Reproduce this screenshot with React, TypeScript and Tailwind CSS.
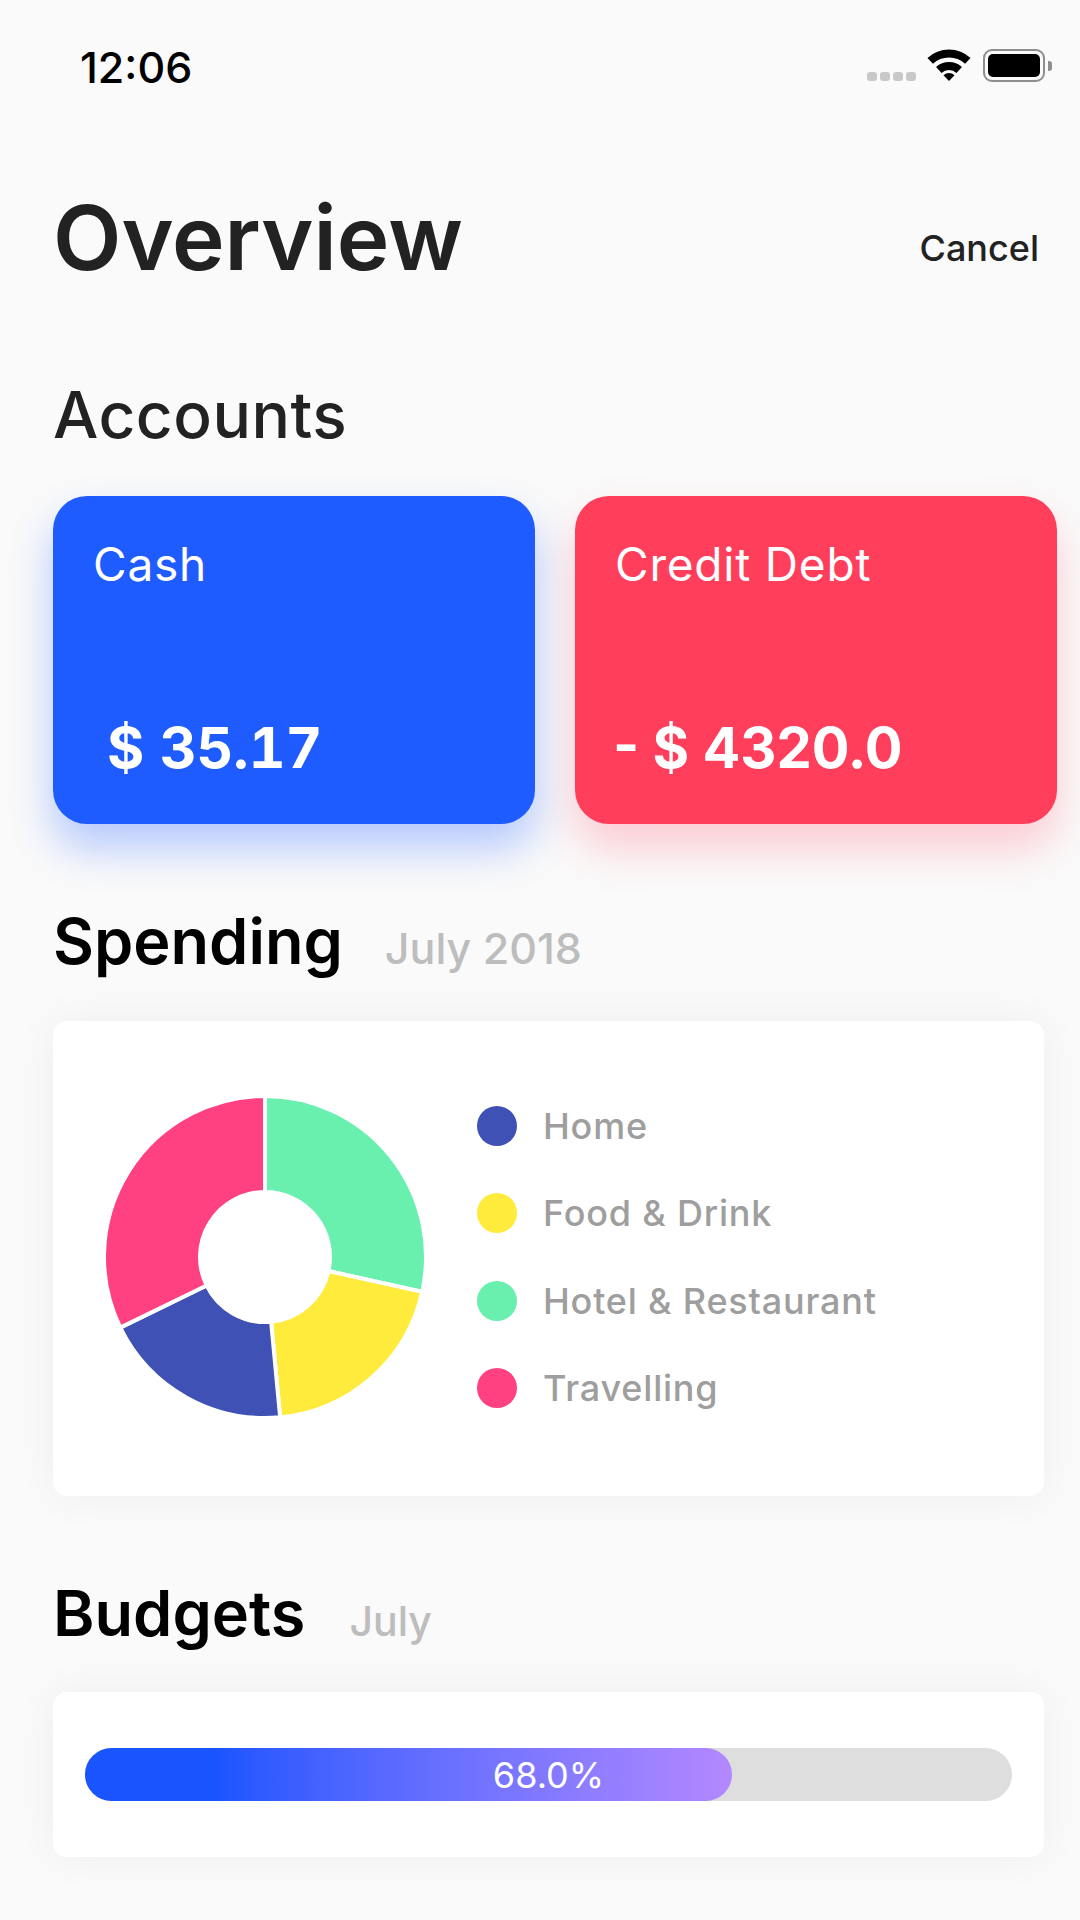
const font = 'font-["Inter",sans-serif]'

const legend = [
  { name: 'Home', dot: 'bg-[#3f51b5]' },
  { name: 'Food & Drink', dot: 'bg-[#ffeb3b]' },
  { name: 'Hotel & Restaurant', dot: 'bg-[#69f0ae]' },
  { name: 'Travelling', dot: 'bg-[#ff4081]' },
]

// clockwise from 12 o'clock, degrees
const slices = [
  { from: 0, to: 102.5, color: '#69f0ae' },
  { from: 102.5, to: 174.6, color: '#ffeb3b' },
  { from: 174.6, to: 244, color: '#3f51b5' },
  { from: 244, to: 360, color: '#ff4081' },
]

function point(r: number, deg: number) {
  const a = (deg * Math.PI) / 180
  return `${162 + r * Math.sin(a)} ${162 - r * Math.cos(a)}`
}

function Donut() {
  return (
    <svg width="324" height="324" viewBox="0 0 324 324" className="shrink-0">
      {slices.map((s) => (
        <path
          key={s.color}
          d={`M${point(65, s.from)} L${point(161, s.from)} A161 161 0 0 1 ${point(161, s.to)} L${point(65, s.to)} A65 65 0 0 0 ${point(65, s.from)} Z`}
          fill={s.color}
          stroke="#fff"
          strokeWidth="4"
        />
      ))}
    </svg>
  )
}

function StatusBar() {
  return (
    <div className="flex h-[100px] items-start justify-between pt-[45px] pl-[80px] pr-[28px]">
      <span className='font-["Inter",sans-serif] text-[43px] leading-[44px] font-medium text-black'>12:06</span>
      <div className="flex items-start pt-[4px]">
        <div className="mt-[23px] mr-[11px] flex gap-[3px]">
          <span className="h-[9px] w-[10px] rounded-[3px] bg-[#c8c8c8]" />
          <span className="h-[9px] w-[10px] rounded-[3px] bg-[#c8c8c8]" />
          <span className="h-[9px] w-[10px] rounded-[3px] bg-[#c8c8c8]" />
          <span className="h-[9px] w-[10px] rounded-[3px] bg-[#c8c8c8]" />
        </div>
        <svg width="44" height="32" viewBox="0 0 44 32" className="mr-[12px]">
          <path d="M3.2 11.9A27.5 27.5 0 0 1 40.8 11.9" fill="none" stroke="#000" strokeWidth="8" />
          <path d="M11.8 21A15 15 0 0 1 32.2 21" fill="none" stroke="#000" strokeWidth="8" />
          <path d="M22 32L16.5 26.2A8 8 0 0 1 27.5 26.2Z" fill="#000" />
        </svg>
        <div className="flex items-center">
          <div className="h-[33px] w-[62px] rounded-[9px] border-2 border-[#8e8e8e] p-[3px]">
            <div className="h-full w-full rounded-[5px] bg-black" />
          </div>
          <div className="ml-[3px] h-[10px] w-[4px] rounded-r-[3px] bg-[#8e8e8e]" />
        </div>
      </div>
    </div>
  )
}

export default function App() {
  return (
    <div className={`h-[1920px] w-[1080px] overflow-hidden bg-[#fafafa] ${font}`}>
      <StatusBar />

      <div className="mt-[83px] flex items-start justify-between pl-[53px] pr-[41px]">
        <h1 className="text-[89px] leading-[110px] font-semibold text-[#222]">Overview</h1>
        <button className="mt-[43px] text-[36px] leading-[44px] font-medium text-[#222]">Cancel</button>
      </div>

      <h2 className="mt-[84px] pl-[53px] text-[64px] leading-[76px] font-medium tracking-[0.5px] text-[#222]">Accounts</h2>

      <div className="mt-[43px] flex gap-[40px] pl-[53px]">
        <div className="flex h-[328px] w-[482px] shrink-0 flex-col justify-between rounded-[34px] bg-[#1f5cff] pt-[40px] pb-[42px] pl-[40px] text-white shadow-[0_24px_44px_rgba(31,92,255,0.32)]">
          <span className="text-[46px] leading-[56px] tracking-[0.8px]">Cash</span>
          <span className="pl-[14px] text-[57px] leading-[68px] font-bold tabular-nums">$ 35.17</span>
        </div>
        <div className="flex h-[328px] w-[482px] shrink-0 flex-col justify-between rounded-[34px] bg-[#ff3e5c] pt-[40px] pb-[42px] pl-[38px] text-white shadow-[0_24px_44px_rgba(255,62,92,0.25)]">
          <span className="pl-[2px] text-[46px] leading-[56px] tracking-[0.8px]">Credit Debt</span>
          <span className="text-[56px] leading-[68px] font-bold">- $ 4320.0</span>
        </div>
      </div>

      <div className="mt-[79px] flex items-baseline pl-[53px]">
        <h2 className="text-[63px] leading-[76px] font-semibold text-black">Spending</h2>
        <span className="ml-[42px] text-[43px] leading-[50px] font-medium text-[#bdbdbd]">July 2018</span>
      </div>

      <div className="mt-[42px] ml-[53px] flex h-[475px] w-[991px] items-center rounded-[14px] bg-white pb-[3px] pl-[50px] shadow-[0_0_44px_rgba(0,0,0,0.05)]">
        <Donut />
        <div className="ml-[50px] flex flex-col gap-[47.5px]">
          {legend.map((item) => (
            <div key={item.name} className="flex h-[40px] items-center gap-[26px]">
              <span className={`h-[40px] w-[40px] rounded-full ${item.dot}`} />
              <span className="text-[36px] leading-[40px] font-medium tracking-[0.8px] text-[#9e9e9e]">{item.name}</span>
            </div>
          ))}
        </div>
      </div>

      <div className="mt-[79px] flex items-baseline pl-[53px]">
        <h2 className="text-[63px] leading-[76px] font-semibold text-black">Budgets</h2>
        <span className="ml-[44px] text-[41px] leading-[50px] font-medium text-[#bdbdbd]">July</span>
      </div>

      <div className="mt-[41px] ml-[53px] flex h-[165px] w-[991px] items-center rounded-[14px] bg-white px-[32px] shadow-[0_0_44px_rgba(0,0,0,0.05)]">
        <div className="relative h-[53px] w-[927px] rounded-full bg-[#dedede]">
          <div className="h-full w-[647px] rounded-full bg-gradient-to-r from-[#1a54ff] from-[20%] to-[#b388ff]" />
          <span className="absolute top-0 left-0 flex h-full w-[927px] items-center justify-center text-[36px] text-white">68.0%</span>
        </div>
      </div>
    </div>
  )
}
